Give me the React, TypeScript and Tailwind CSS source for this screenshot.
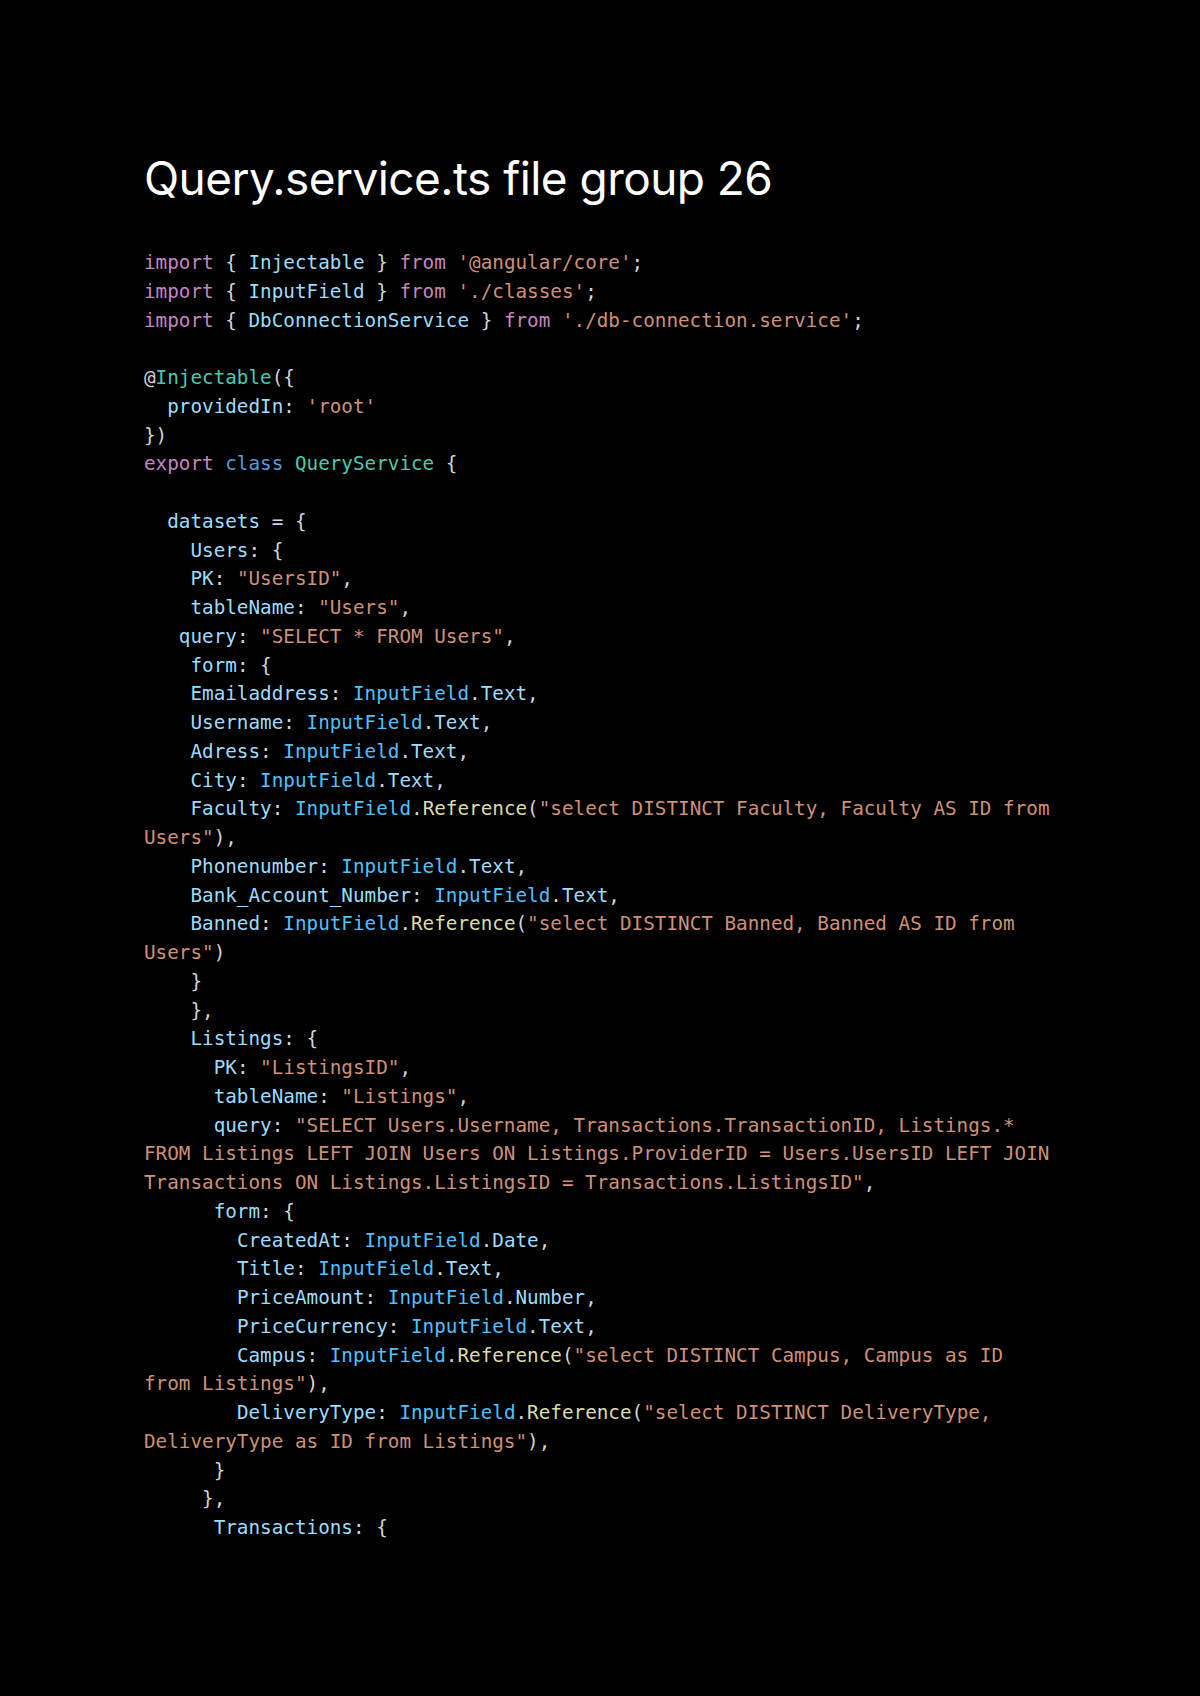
const colors: Record<string, string> = {
  k: "text-[#c586c0]",
  b: "text-[#569cd6]",
  t: "text-[#4ec9b0]",
  v: "text-[#9cdcfe]",
  c: "text-[#4fc1ff]",
  f: "text-[#dcdcaa]",
  s: "text-[#ce9178]",
  p: "text-[#d4d4d4]",
};

// each line is marked up with {x} colour tags, see colors above
const source = [
  "{k}import{p} { {v}Injectable{p} } {k}from {s}'@angular/core'{p};",
  "{k}import{p} { {v}InputField{p} } {k}from {s}'./classes'{p};",
  "{k}import{p} { {v}DbConnectionService{p} } {k}from {s}'./db-connection.service'{p};",
  "",
  "{p}@{t}Injectable{p}({",
  "  {v}providedIn{p}: {s}'root'",
  "{p}})",
  "{k}export {b}class {t}QueryService {p}{",
  "",
  "  {v}datasets {p}= {",
  "    {v}Users{p}: {",
  '    {v}PK{p}: {s}"UsersID"{p},',
  '    {v}tableName{p}: {s}"Users"{p},',
  '   {v}query{p}: {s}"SELECT * FROM Users"{p},',
  "    {v}form{p}: {",
  "    {v}Emailaddress{p}: {c}InputField{p}.{v}Text{p},",
  "    {v}Username{p}: {c}InputField{p}.{v}Text{p},",
  "    {v}Adress{p}: {c}InputField{p}.{v}Text{p},",
  "    {v}City{p}: {c}InputField{p}.{v}Text{p},",
  '    {v}Faculty{p}: {c}InputField{p}.{f}Reference{p}({s}"select DISTINCT Faculty, Faculty AS ID from',
  '{s}Users"{p}),',
  "    {v}Phonenumber{p}: {c}InputField{p}.{v}Text{p},",
  "    {v}Bank_Account_Number{p}: {c}InputField{p}.{v}Text{p},",
  '    {v}Banned{p}: {c}InputField{p}.{f}Reference{p}({s}"select DISTINCT Banned, Banned AS ID from',
  '{s}Users"{p})',
  "    {p}}",
  "    {p}},",
  "    {v}Listings{p}: {",
  '      {v}PK{p}: {s}"ListingsID"{p},',
  '      {v}tableName{p}: {s}"Listings"{p},',
  '      {v}query{p}: {s}"SELECT Users.Username, Transactions.TransactionID, Listings.*',
  "{s}FROM Listings LEFT JOIN Users ON Listings.ProviderID = Users.UsersID LEFT JOIN",
  '{s}Transactions ON Listings.ListingsID = Transactions.ListingsID"{p},',
  "      {v}form{p}: {",
  "        {v}CreatedAt{p}: {c}InputField{p}.{v}Date{p},",
  "        {v}Title{p}: {c}InputField{p}.{v}Text{p},",
  "        {v}PriceAmount{p}: {c}InputField{p}.{v}Number{p},",
  "        {v}PriceCurrency{p}: {c}InputField{p}.{v}Text{p},",
  '        {v}Campus{p}: {c}InputField{p}.{f}Reference{p}({s}"select DISTINCT Campus, Campus as ID',
  '{s}from Listings"{p}),',
  '        {v}DeliveryType{p}: {c}InputField{p}.{f}Reference{p}({s}"select DISTINCT DeliveryType,',
  '{s}DeliveryType as ID from Listings"{p}),',
  "      {p}}",
  "     {p}},",
  "      {v}Transactions{p}: {",
];

function CodeLine({ line }: { line: string }) {
  const parts = line.split(/\{([kbtvcfsp])\}/);
  const spans = [];
  let color = "p";
  for (let i = 0; i < parts.length; i++) {
    if (i % 2 === 1) {
      color = parts[i];
      continue;
    }
    if (!parts[i]) continue;
    spans.push(
      <span key={i} className={colors[color]}>
        {parts[i]}
      </span>
    );
  }
  return <div className="h-[28.75px] whitespace-pre">{spans.length ? spans : " "}</div>;
}

export default function App() {
  return (
    <div className="min-h-[1696px] w-full bg-black pl-[144px] pt-[155px]">
      <h1 className="font-['Inter',sans-serif] text-[46px] leading-none font-normal tracking-[-0.012em] text-white">
        Query.service.ts file group 26
      </h1>
      <div className="mt-[48px] font-['DejaVu_Sans_Mono',monospace] text-[19.3px] leading-[28.75px]">
        {source.map((line, i) => (
          <CodeLine key={i} line={line} />
        ))}
      </div>
    </div>
  );
}
